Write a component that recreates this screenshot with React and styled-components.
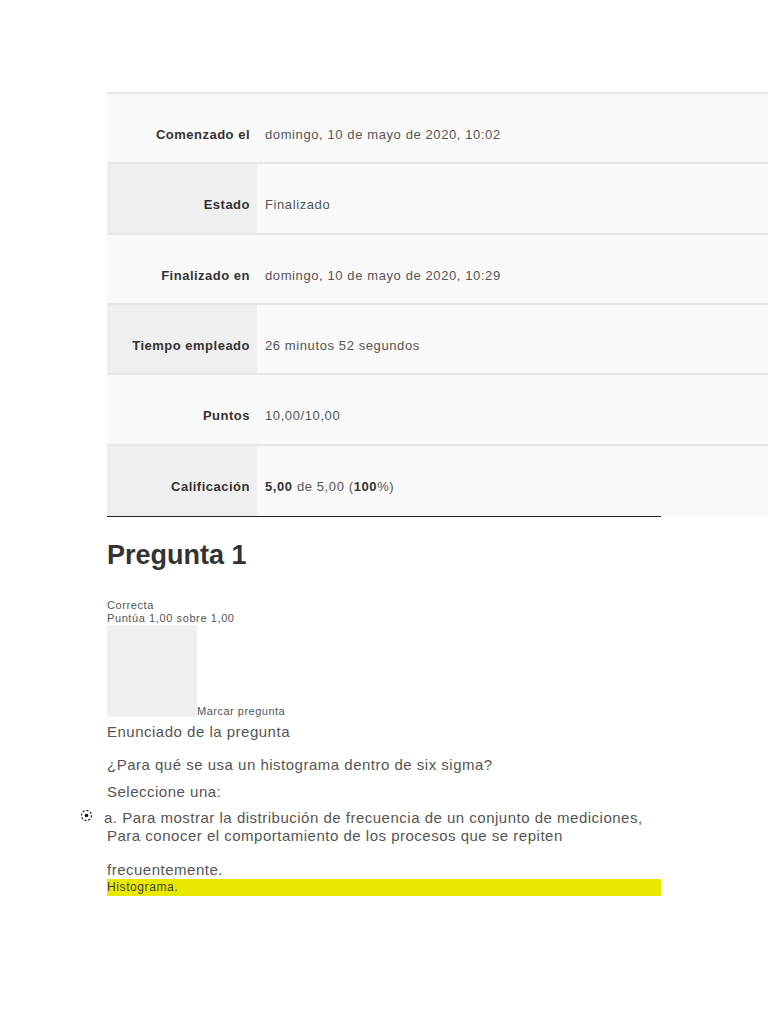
import React from 'react'
import styled, { createGlobalStyle } from 'styled-components'

const GlobalStyle = createGlobalStyle`
body {
  margin: 0;
  background: #fff;
  font-family: "Liberation Sans", Arial, sans-serif;
  overflow-x: hidden;
}
`;

const Page = styled.div`
padding: 92px 0 0 107px;
`;

const Summary = styled.div`
border-top: 2px solid #e6e6e6;
`;

const Row = styled.div`
display: flex;
height: 70.33px;
box-sizing: border-box;
border-bottom: ${props => props.last ? "none" : "2px solid #e6e6e6"};
background: #f9f9f9;
`;

const Label = styled.div`
width: 150px;
flex-shrink: 0;
box-sizing: border-box;
padding: 33px 7px 0 0;
text-align: right;
font-size: 13px;
font-weight: bold;
letter-spacing: 0.5px;
color: #333;
background: ${props => props.shade ? "#efefef" : "#f9f9f9"};
`;

const Value = styled.div`
flex: 1;
padding: 33px 0 0 8px;
font-size: 13px;
letter-spacing: 0.6px;
color: #555;
b {
  color: #333;
}
`;

const Rule = styled.div`
width: 554px;
height: 1px;
background: #222;
`;

const Title = styled.h2`
margin: 22px 0 0;
font-size: 27px;
font-weight: bold;
color: #333;
line-height: 32px;
`;

const Info = styled.div`
margin-top: 28px;
font-size: 11px;
line-height: 13px;
letter-spacing: 0.6px;
color: #555;
`;

const FlagRow = styled.div`
display: flex;
align-items: flex-end;
`;

const FlagBox = styled.div`
width: 90px;
height: 92px;
background: #efefef;
`;

const FlagText = styled.span`
font-size: 11px;
line-height: 11px;
letter-spacing: 0.5px;
color: #555;
`;

const Para = styled.div`
font-size: 15px;
line-height: 18px;
letter-spacing: 0.5px;
color: #555;
margin-top: ${props => props.gap || 0}px;
`;

const Option = styled.div`
display: flex;
margin: 8px 0 0 -27px;
`;

const Radio = styled.svg`
width: 14px;
height: 15px;
flex-shrink: 0;
margin: -1px 10px 0 0;
`;

const OptionText = styled.div`
font-size: 15px;
line-height: 18px;
letter-spacing: 0.5px;
color: #555;
width: 550px;
padding-left: 3px;
text-indent: -3px;
p {
  margin: 16px 0 0;
  text-indent: 0;
}
`;

const Highlight = styled.div`
width: 554px;
height: 17px;
background: #e8e800;
font-size: 12px;
line-height: 17px;
letter-spacing: 0.6px;
color: #444;
`;

const rows = [
  ["Comenzado el", "domingo, 10 de mayo de 2020, 10:02"],
  ["Estado", "Finalizado"],
  ["Finalizado en", "domingo, 10 de mayo de 2020, 10:29"],
  ["Tiempo empleado", "26 minutos 52 segundos"],
  ["Puntos", "10,00/10,00"],
]

const App = () => {
  return (
    <Page>
      <GlobalStyle />
      <Summary>
        {rows.map(([label, value], i) => (
          <Row key={label}>
            <Label shade={i % 2 === 1}>{label}</Label>
            <Value>{value}</Value>
          </Row>
        ))}
        <Row last>
          <Label shade>Calificación</Label>
          <Value><b>5,00</b> de 5,00 (<b>100</b>%)</Value>
        </Row>
      </Summary>
      <Rule />
      <Title>Pregunta 1</Title>
      <Info>
        <div>Correcta</div>
        <div>Puntúa 1,00 sobre 1,00</div>
      </Info>
      <FlagRow>
        <FlagBox />
        <FlagText>Marcar pregunta</FlagText>
      </FlagRow>
      <Para gap={6}>Enunciado de la pregunta</Para>
      <Para gap={15}>¿Para qué se usa un histograma dentro de six sigma?</Para>
      <Para gap={9}>Seleccione una:</Para>
      <Option>
        <Radio viewBox="0 0 14 15">
          <circle cx="6.5" cy="7.5" r="5" fill="none" stroke="#222" strokeWidth="1.2" strokeDasharray="2.2 1.6" />
          <circle cx="6.5" cy="7.5" r="1.8" fill="#111" />
        </Radio>
        <OptionText>
          a. Para mostrar la distribución de frecuencia de un conjunto de mediciones, Para conocer el comportamiento de los procesos que se repiten
          <p>frecuentemente.</p>
        </OptionText>
      </Option>
      <Highlight>Histograma.</Highlight>
    </Page>
  )
}

export default App
